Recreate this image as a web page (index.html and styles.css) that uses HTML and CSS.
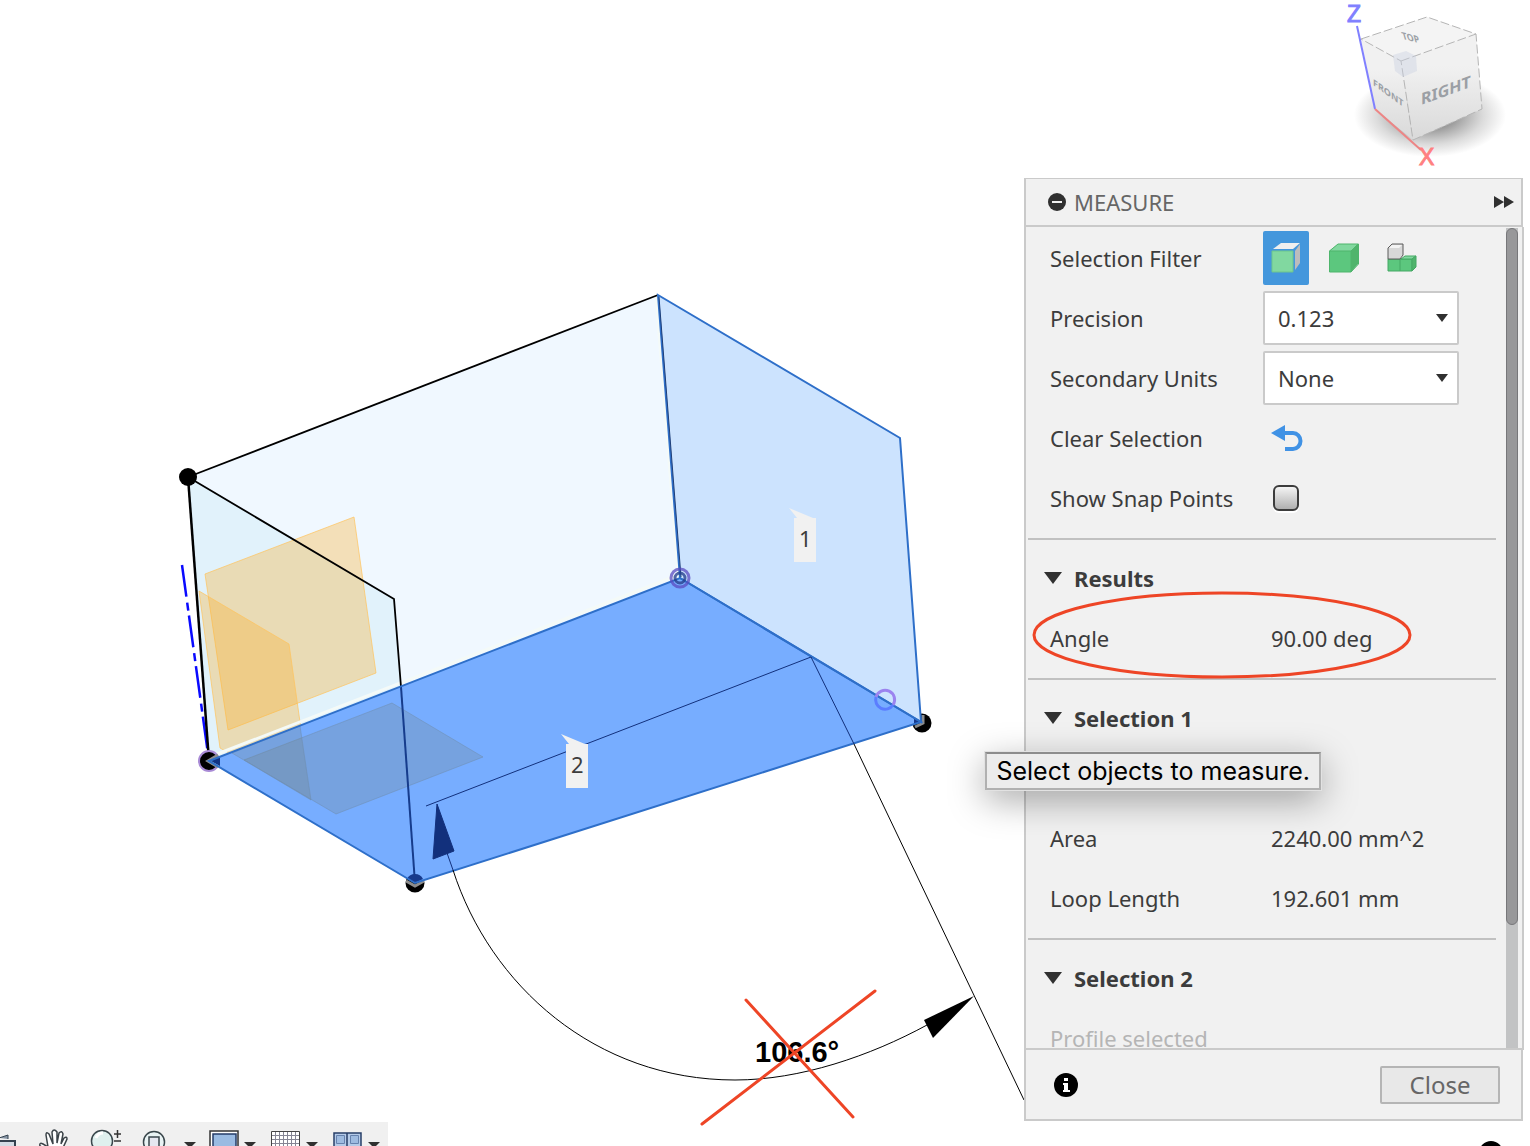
FILE: index.html
```html
<!DOCTYPE html>
<html lang="en">
<head>
  <meta charset="UTF-8">
  <title>Measure</title>
  <link rel="stylesheet" href="styles.css">
</head>
<body>
<main class="workspace">

  <svg class="scene">
    <!-- faces -->
    <polygon points="188,477 658,295 680,578 209,761" fill="#f0f8ff"/>
    <polygon points="188,477 394,599 415,883 209,761" fill="#e1f2fb"/>
    <!-- origin planes -->
    <g fill="#f9b233" fill-opacity=".35" stroke="#ffc35c" stroke-opacity=".7">
      <polygon points="205,574 354,517 376,673 228,730"/>
      <polygon points="199,591 289,644 311,800 220,748"/>
    </g>
    <polyline points="207,758 678,575 656,295" fill="none" stroke="#f4faf8" stroke-width="3"/>
    <path d="M182 565 208 754" stroke="#0a0aff" stroke-width="2.500" stroke-dasharray="32 6 8 5"/>
    <g fill="none" stroke="#000" stroke-width="1.800">
      <path d="M188 477 658 295"/>
      <path d="M188 477 209 761" stroke-width="2.500"/>
      <path d="M188 477 394 599 401 687"/>
    </g>
    <circle cx="188" cy="477" r="9"/>
    <circle cx="209" cy="761" r="10" stroke="#a98bd6" stroke-width="2"/>
    <circle cx="415" cy="883" r="9.500"/>
    <circle cx="922" cy="723" r="9.500"/>

    <!-- selected faces -->
    <polygon points="658,295 900,438 921,722 680,578" fill="#cce3fe"/>
    <polygon points="209,761 680,578 921,722 415,883" fill="#77adff"/>
    <g fill="#747a60" fill-opacity=".2" stroke="#6f8dae" stroke-opacity=".5">
      <polygon points="392,703 483,757 336,814 244,760"/>
      <polygon points="232,753 300,726 311,800"/>
    </g>
    <path d="M401 687 415 883" stroke="#163c8c" stroke-width="2"/>
    <path d="M211 761 220 756V766Z" fill="#123382"/>
    <path d="M218 755 208 761 218 767" fill="none" stroke="#8d8d8d" stroke-width="3"/>
    <path d="M407 879A9 9 0 0 1 423 879L415 883Z" fill="#16398c"/>
    <path d="M406 881 415 886 424 881" fill="none" stroke="#8d8d8d" stroke-width="3"/>
    <path d="M914 718V724L921 722Z" fill="#16398c"/>
    <path d="M923 715V723L915 727" fill="none" stroke="#8d8d8d" stroke-width="3"/>
    <g fill="none" stroke="#2e6fc9" stroke-width="2">
      <polygon points="658,295 900,438 921,722 680,578"/>
      <polygon points="209,761 680,578 921,722 415,883"/>
      <path d="M659 297 681 577" stroke="#1f3f78" stroke-width="1"/>
    </g>
    <g fill="none" stroke-width="3">
      <circle cx="680" cy="578" r="9" stroke="#5a4bc0" stroke-opacity=".75"/>
      <circle cx="680" cy="578" r="5" stroke="#27408e" stroke-opacity=".8"/>
      <path d="M876 697A9.500 9.500 0 1 1 893 705" stroke="#9b83ef"/>
      <path d="M893 705A9.500 9.500 0 0 1 876 697" stroke="#5b7dff"/>
    </g>

    <!-- angle dimension -->
    <g fill="none" stroke="#12307c" stroke-width="1">
      <path d="M426 806 811 657 854 744"/>
      <path d="M447 853 453 870"/>
      <path d="M437 804 454 851 433 859Z" fill="#12307c"/>
    </g>
    <path d="M854 744 1024 1100" stroke="#000"/>
    <path d="M453 870C490 985 595 1080 735 1080 800 1080 870 1056 927 1025" fill="none" stroke="#000"/>
    <path d="M974 996 924 1020 933 1038Z"/>
    <text class="dimension" x="755" y="1062">106.6°</text>
    <path d="M746 1000 853 1117M875 991 702 1124" stroke="#ee4526" stroke-width="3" stroke-linecap="round"/>

    <!-- selection tags -->
    <g class="tag">
      <path d="M789 508 813 518H816V562H794V518H797Z"/>
      <text x="799" y="547">1</text>
      <path d="M561 734 585 744H588V788H566V744H569Z"/>
      <text x="571" y="773">2</text>
    </g>
  </svg>

  <svg class="viewcube" width="200" height="178">
    <defs>
      <radialGradient id="shade">
        <stop offset=".3" stop-color="#777" stop-opacity=".8"/>
        <stop offset=".7" stop-color="#888" stop-opacity=".3"/>
        <stop offset="1" stop-color="#888" stop-opacity="0"/>
      </radialGradient>
      <linearGradient id="face" x1="0" y1="0" x2="0" y2="1">
        <stop offset=".3" stop-color="#f1f1f1"/>
        <stop offset="1" stop-color="#d9d9d9"/>
      </linearGradient>
    </defs>
    <ellipse cx="100" cy="115" rx="76" ry="42" fill="url(#shade)"/>
    <polygon points="31,39 97,17 146,34 71,61" fill="#f4f4f4"/>
    <polygon points="31,39 71,61 83,140 45,109" fill="url(#face)"/>
    <polygon points="71,61 146,34 152,109 83,140" fill="url(#face)"/>
    <path d="M31 39 97 17 146 34 152 109 83 140 71 61 31 39M71 61 146 34" fill="none" stroke="#b5b5b5" stroke-dasharray="9 3"/>
    <path d="M63 55 76 51 86 56 87 71 73 77 65 71Z" fill="#c8d0e0" fill-opacity=".4"/>
    <path d="M27 26 45 109" stroke="#8080ff" stroke-width="2"/>
    <path d="M45 109 91 150" stroke="#ed8585" stroke-width="2"/>
    <g class="cube-label">
      <text transform="translate(91 105) skewY(-20)">RIGHT</text>
      <text class="small" transform="translate(43 85) skewY(36)">FRONT</text>
      <text class="small" transform="translate(73 39) rotate(14) skewX(30)">TOP</text>
    </g>
    <text class="axis" x="17" y="22" fill="#8080ff" stroke="#8080ff">Z</text>
    <text class="axis" x="89" y="165" fill="#ff8080" stroke="#ff8080">X</text>
  </svg>

  <section class="panel">
    <header class="panel-header">
      <svg width="18" height="18"><circle cx="9" cy="9" r="9" fill="#303030"/><path d="M4 9H14" stroke="#f1f1f1" stroke-width="2"/></svg>
      <h1>MEASURE</h1>
      <button class="icon-button" aria-label="Collapse">
        <svg width="20" height="12"><path d="M0 0 10 6 0 12ZM10 0 20 6 10 12Z" fill="#303030"/></svg>
      </button>
    </header>

    <div class="panel-body">
      <div class="content">
        <div class="group">
          <div class="row">
            <span class="name">Selection Filter</span>
            <div class="filters">
              <button class="filter active" aria-label="Select face">
                <svg width="30" height="30"><path d="M2 6 10 0H29L22 6Z" fill="#efefef"/><path d="M24 8 29 1V20L24 27Z" fill="#bcbcbc"/><path d="M1 8H22V29H1Z" fill="#81d8a0" stroke="#6cc58d"/></svg>
              </button>
              <button class="filter" aria-label="Select body">
                <svg width="30" height="30"><path d="M0 8 9 1H29L22 8Z" fill="#82d89f"/><path d="M22 8 29 1V21L22 29Z" fill="#50b46c"/><path d="M0 8H22V29H0Z" fill="#5cc77e"/><path d="M.5 8 9 1H29.500V21L22 29H.5ZM.5 8H22V29M22 8 29 1" fill="none" stroke="#4eb56c"/></svg>
              </button>
              <button class="filter" aria-label="Select component">
                <svg width="30" height="30"><path d="M1 16H25V28H1Z" fill="#5cc77e" stroke="#45a864"/><path d="M14 16 18 13H29L25 16Z" fill="#82d89f" stroke="#45a864"/><path d="M25 16 29 13V24L25 28Z" fill="#50b46c" stroke="#45a864"/><path d="M13 16V28" stroke="#45a864"/><path d="M1 5 5 1H16V12L13 16H1Z" fill="#d8d8d8" stroke="#5b5b5b"/><path d="M2 5 5 2H15L12 5Z" fill="#f3f3f3"/></svg>
              </button>
            </div>
          </div>
          <div class="row">
            <label class="name" for="precision">Precision</label>
            <div class="dropdown"><select id="precision"><option>0.123</option></select></div>
          </div>
          <div class="row">
            <label class="name" for="units">Secondary Units</label>
            <div class="dropdown"><select id="units"><option>None</option></select></div>
          </div>
          <div class="row">
            <span class="name">Clear Selection</span>
            <button class="icon-button value" aria-label="Clear Selection">
              <svg width="33" height="27"><path d="M0 8 14 0V16Z" fill="#4092e5"/><path d="M13 8H22A7.500 8 0 0 1 22 24H14" fill="none" stroke="#4092e5" stroke-width="4"/></svg>
            </button>
          </div>
          <div class="row">
            <label class="name" for="snap">Show Snap Points</label>
            <input type="checkbox" id="snap">
          </div>
        </div>

        <div class="group">
          <h2><button class="fold">Results</button></h2>
          <div class="row">
            <span class="name">Angle</span><span class="value">90.00 deg</span>
            <svg class="highlight" width="380" height="90"><ellipse cx="190" cy="45" rx="188" ry="42" fill="none" stroke="#ee4526" stroke-width="3"/></svg>
          </div>
        </div>

        <div class="group">
          <h2><button class="fold">Selection 1</button></h2>
          <div class="row"></div>
          <div class="row"><span class="name">Area</span><span class="value">2240.00 mm^2</span></div>
          <div class="row"><span class="name">Loop Length</span><span class="value">192.601 mm</span></div>
        </div>

        <div class="group">
          <h2><button class="fold">Selection 2</button></h2>
          <div class="row hint">Profile selected</div>
        </div>
      </div>
      <div class="scrollbar"><div class="thumb"></div></div>
    </div>

    <footer class="panel-footer">
      <button class="icon-button" aria-label="Info">
        <svg width="24" height="24"><circle cx="12" cy="12" r="12"/><path d="M10 5H14V8H10ZM9 10H14V17H16V19H9V17H10V12H9Z" fill="#fff"/></svg>
      </button>
      <button class="close">Close</button>
    </footer>
  </section>

  <div class="tooltip" role="tooltip">Select objects to measure.</div>

  <nav class="toolbar">
    <button aria-label="Look at"><svg width="24" height="24"><path d="M-1 16 8 13V17" fill="#8795a5" stroke="#344250"/><path d="M-1 19H15V30H-1Z" fill="#d3dce5" stroke="#344250" stroke-width="2"/></svg></button>
    <button aria-label="Pan"><svg width="52" height="24"><path d="M24 28 16 24Q15 20 19 22L24 25 22 13Q22 9 25 12L29 22 28 10Q30 6 33 10L33 21 35 11Q38 8 39 12L37 22 40 16Q43 14 43 17L38 28" fill="#fff" stroke="#3b4348" stroke-width="1.500"/></svg></button>
    <button aria-label="Zoom"><svg width="54" height="24"><circle cx="26" cy="19" r="10.500" fill="#dff0ee" stroke="#39464b" stroke-width="1.500"/><path d="M20 16Q22 11 27 11" fill="none" stroke="#fff" stroke-width="3"/><path d="M38 12H45M41.500 8V16M38 19H45" stroke="#333" stroke-width="1.500"/></svg></button>
    <button aria-label="Fit"><svg width="72" height="24"><circle cx="24" cy="20" r="10.500" fill="#e9f3f4" stroke="#39464b" stroke-width="1.500"/><path d="M19 15H29V26H19Z" fill="#e5e7f0" stroke="#39464b" stroke-width="1.500"/><path d="M54 20H66L60 26Z" fill="#303030"/></svg></button>
    <button aria-label="Display settings"><svg width="60" height="24"><path d="M8 9H36V26H8Z" fill="#fff" stroke="#333" stroke-width="1.500"/><path d="M11 12H34V26H11Z" fill="#9abbe2" stroke="#243c68" stroke-width="1.500"/><path d="M42 20H54L48 26Z" fill="#303030"/></svg></button>
    <button aria-label="Grid and snaps"><svg width="64" height="24"><path d="M9.500 9.500H37.500V26H9.500Z" fill="#fff" stroke="#444"/><path d="M13.500 10V24M17.500 10V24M21.500 10V24M25.500 10V24M29.500 10V24M33.500 10V24M10 13.500H37M10 17.500H37M10 21.500H37" stroke="#858594"/><path d="M44 20H56L50 26Z" fill="#303030"/></svg></button>
    <button aria-label="Viewports"><svg width="62" height="24"><path d="M8 11H21V26H8ZM21 11H35V26H21Z" fill="#b5cbe8" stroke="#273f68" stroke-width="1.500"/><path d="M10.500 13.500H18.500V21.500H10.500ZM24.500 13.500H32.500V21.500H24.500Z" fill="#9ebbe0" stroke="#6682ae"/><path d="M42 20H54L48 26Z" fill="#303030"/></svg></button>
  </nav>

  <div class="status-dot"></div>
</main>
</body>
</html>
```
FILE: styles.css
```css
* { box-sizing: border-box; margin: 0; padding: 0; }
body {
  background: #fff;
  color: #3c3c3c;
  font-family: "Noto Sans", sans-serif;
  font-size: 22px;
  line-height: 30px;
}
button, select { font: inherit; color: inherit; }
button { border: 0; background: none; cursor: pointer; }
svg { display: block; }

.workspace {
  position: relative;
  height: 100vh;
  overflow: hidden;
}
.scene {
  width: 100%;
  height: 100%;
}
.dimension {
  font: bold 29px "Liberation Sans", sans-serif;
}
.tag path { fill: #f1f1f1; }
.tag text { fill: #3c3c3c; }

.viewcube {
  position: absolute;
  top: 0;
  right: 0;
}
.cube-label {
  fill: #9b9fa5;
  font-weight: bold;
  font-size: 16px;
}
.cube-label .small { font-size: 9px; }
.axis { font: 23px "Liberation Sans", sans-serif; }

/* measure panel */
.panel {
  position: absolute;
  top: 178px;
  right: 6px;
  bottom: 25px;
  width: 500px;
  display: flex;
  flex-direction: column;
}
.panel-header,
.panel-footer {
  display: flex;
  align-items: center;
  background: #f1f1f1;
  border: 2px solid #cacaca;
  margin-right: 1px;
}
.panel-header {
  height: 49px;
  flex: none;
  border-top-width: 1px;
  padding: 0 7px 0 22px;
  gap: 8px;
}
.panel-header h1 {
  flex: 1;
  color: #666;
  font-size: 22px;
  font-weight: normal;
}
.icon-button { display: flex; }
.panel-body {
  flex: 1;
  min-height: 0;
  display: flex;
  overflow: hidden;
  padding-top: 1px;
  background: #f1f1f1;
  border: 2px solid #cacaca;
  border-top: 0;
}
.content {
  flex: 1;
  padding: 0 10px 0 2px;
}
.group {
  border-bottom: 2px solid #c1c1c1;
  padding-bottom: 10px;
  margin-bottom: 8px;
}
.row {
  position: relative;
  display: flex;
  align-items: center;
  height: 60px;
  padding-left: 22px;
}
.name { width: 213px; }
.value { margin-left: 8px; }
.hint { color: #b5b5b5; }

.filters { display: flex; gap: 12px; }
.filter {
  display: flex;
  align-items: center;
  justify-content: center;
  width: 46px;
  height: 54px;
  border-radius: 2px;
}
.filter.active { background: #4497dc; }

.dropdown {
  position: relative;
  width: 196px;
}
.dropdown::after {
  content: "";
  position: absolute;
  right: 11px;
  top: 23px;
  border: 6px solid transparent;
  border-top: 8px solid #303030;
  border-bottom: 0;
  pointer-events: none;
}
select {
  appearance: none;
  width: 100%;
  height: 54px;
  padding: 0 13px;
  background: #fff;
  border: 2px solid #cacaca;
  border-radius: 2px;
}
input[type="checkbox"] {
  appearance: none;
  width: 26px;
  height: 26px;
  margin-left: 10px;
  border: 2px solid #3c3c3c;
  border-radius: 6px;
  background: linear-gradient(#f4f4f4, #b0b0b0);
  box-shadow: 0 2px 0 #fff;
}

h2 { font-size: 22px; }
.fold {
  display: flex;
  align-items: center;
  gap: 12px;
  height: 60px;
  padding-left: 16px;
  font-weight: bold;
}
.fold::before {
  content: "";
  border: 9px solid transparent;
  border-top: 12px solid #303030;
  border-bottom: 0;
}
.highlight {
  position: absolute;
  left: 4px;
  top: -18px;
}

.scrollbar {
  width: 12px;
  margin-right: 4px;
  background: #c2c3c4;
}
.thumb {
  height: 85%;
  background: #98989a;
  border: 1px solid #77777a;
  border-radius: 6px;
}

.panel-footer {
  flex: none;
  justify-content: space-between;
  height: 71px;
  border-top: 0;
  padding: 0 21px 0 28px;
}
.close {
  width: 120px;
  height: 38px;
  color: #666;
  background: #e8e8e8;
  border: 2px solid #b5b5b5;
  border-radius: 2px;
  font-size: 24px;
}

.tooltip {
  position: absolute;
  top: 752px;
  right: 209px;
  padding: 2px 9px;
  color: #000;
  background: #ececec;
  border: 2px solid #b0b0b0;
  border-top-color: #8c8c8c;
  outline: 1px solid #e2e2e2;
  box-shadow: 0 10px 36px rgba(0, 0, 0, 0.35);
  font-family: Inter, sans-serif;
  font-size: 25px;
}

.toolbar {
  position: absolute;
  left: 0;
  bottom: 0;
  display: flex;
  background: #f0f0f0;
}
.status-dot {
  position: absolute;
  right: 27px;
  bottom: -19px;
  width: 24px;
  height: 24px;
  border-radius: 50%;
  background: #000;
}
```
